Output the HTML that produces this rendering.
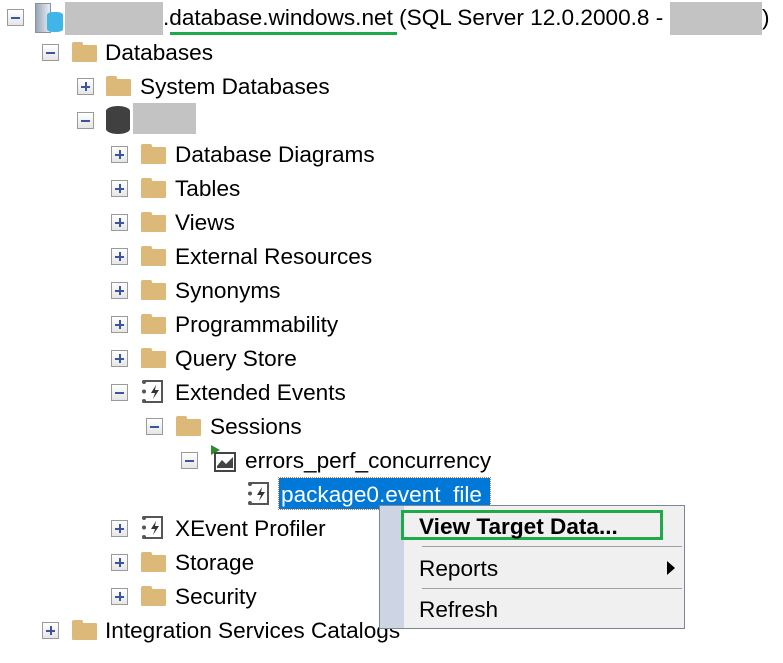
<!DOCTYPE html>
<html><head><style>
body{margin:0;width:783px;height:663px;background:#fff;position:relative;overflow:hidden;font-family:"Liberation Sans",sans-serif;font-size:22.6px;color:#000}
.r{position:absolute;height:34px;line-height:36px;white-space:nowrap}
.e{position:absolute;width:15px;height:15px;border:1px solid #9a9a9a;background:linear-gradient(#fff,#e6e6e6);top:9px}
.e::before{content:"";position:absolute;left:3px;top:7px;width:9px;height:2px;background:#3b55a0}
.p::after{content:"";position:absolute;left:7px;top:3px;width:2px;height:9px;background:#3b55a0}
.f{position:absolute;top:7px;width:25px;height:20px}
.f::before{content:"";position:absolute;left:0;top:0;width:11px;height:5px;background:#dcb879;border-radius:2px 2px 0 0}
.f::after{content:"";position:absolute;left:0;top:3px;width:25px;height:17px;background:#dcb879;border-radius:1px}
.x{position:absolute;top:5px;width:21px;height:23px;border:2px solid #555;border-left:4px dotted #555;background:#fff;box-sizing:border-box}
.x svg{position:absolute;left:3px;top:2px}
.t{position:absolute;top:0}
.g{position:absolute;background:#c3c3c3}
</style></head><body>
<div class="r" style="top:0;left:0;width:783px">
<div class="e" style="left:7px"></div>
<div style="position:absolute;left:35px;top:3px;width:14px;height:28px;background:linear-gradient(90deg,#9aa6b6,#e7edf4);border:1px solid #8891a0"></div>
<div style="position:absolute;left:47px;top:12px;width:16px;height:20px;background:#41b5e8;border-radius:6px/3px"></div>
<div class="g" style="left:65px;top:2px;width:98px;height:33px"></div>
<span class="t" style="left:163px">.database.windows.net (SQL Server 12.0.2000.8 - </span>
<div class="g" style="left:670px;top:2px;width:92px;height:33px"></div>
<span class="t" style="left:762px">)</span>
<div style="position:absolute;left:170px;top:32px;width:227px;height:3px;background:#1faa4a"></div>
</div>
<div class="r" style="top:35px;left:0"><div class="e" style="left:42px"></div><div class="f" style="left:72px"></div><span class="t" style="left:105px">Databases</span></div>
<div class="r" style="top:69px;left:0"><div class="e p" style="left:77px"></div><div class="f" style="left:106px"></div><span class="t" style="left:140px">System Databases</span></div>
<div class="r" style="top:103px;left:0"><div class="e" style="left:77px"></div><div style="position:absolute;left:106px;top:3px;width:24px;height:28px;background:#404040;border-radius:12px/5px"></div><div class="g" style="left:133px;top:0;width:63px;height:31px"></div></div>
<div class="r" style="top:137px;left:0"><div class="e p" style="left:111px"></div><div class="f" style="left:141px"></div><span class="t" style="left:175px">Database Diagrams</span></div>
<div class="r" style="top:171px;left:0"><div class="e p" style="left:111px"></div><div class="f" style="left:141px"></div><span class="t" style="left:175px">Tables</span></div>
<div class="r" style="top:205px;left:0"><div class="e p" style="left:111px"></div><div class="f" style="left:141px"></div><span class="t" style="left:175px">Views</span></div>
<div class="r" style="top:239px;left:0"><div class="e p" style="left:111px"></div><div class="f" style="left:141px"></div><span class="t" style="left:175px">External Resources</span></div>
<div class="r" style="top:273px;left:0"><div class="e p" style="left:111px"></div><div class="f" style="left:141px"></div><span class="t" style="left:175px">Synonyms</span></div>
<div class="r" style="top:307px;left:0"><div class="e p" style="left:111px"></div><div class="f" style="left:141px"></div><span class="t" style="left:175px">Programmability</span></div>
<div class="r" style="top:341px;left:0"><div class="e p" style="left:111px"></div><div class="f" style="left:141px"></div><span class="t" style="left:175px">Query Store</span></div>
<div class="r" style="top:375px;left:0"><div class="e" style="left:111px"></div><div class="x" style="left:142px"><svg width="12" height="16"><path d="M7 1 L2 9 L6 9 L4 15 L10 6 L6 6 Z" fill="#333"/></svg></div><span class="t" style="left:175px">Extended Events</span></div>
<div class="r" style="top:409px;left:0"><div class="e" style="left:146px"></div><div class="f" style="left:176px"></div><span class="t" style="left:210px">Sessions</span></div>
<div class="r" style="top:443px;left:0"><div class="e" style="left:181px"></div>
<div style="position:absolute;left:211px;top:2px;width:0;height:0;border-left:9px solid #2e8b2e;border-top:5px solid transparent;border-bottom:5px solid transparent"></div>
<div style="position:absolute;left:214px;top:9px;width:22px;height:20px;border:2px solid #444;box-sizing:border-box;background:#fff"><svg width="18" height="16" style="position:absolute;left:0;top:0"><path d="M1 12 L6 6 L10 10 L17 3 L17 14 L1 14Z" fill="#444"/></svg></div>
<span class="t" style="left:245px">errors_perf_concurrency</span></div>
<div class="r" style="top:477px;left:0"><div class="x" style="left:248px"><svg width="12" height="16"><path d="M7 1 L2 9 L6 9 L4 15 L10 6 L6 6 Z" fill="#333"/></svg></div>
<div style="position:absolute;left:279px;top:1px;width:211px;height:31px;background:#0078d7;outline:1px dotted #d08030"></div>
<span class="t" style="left:281px;color:#fff">package0.event_file</span></div>
<div class="r" style="top:511px;left:0"><div class="e p" style="left:111px"></div><div class="x" style="left:142px"><svg width="12" height="16"><path d="M7 1 L2 9 L6 9 L4 15 L10 6 L6 6 Z" fill="#333"/></svg></div><span class="t" style="left:175px">XEvent Profiler</span></div>
<div class="r" style="top:545px;left:0"><div class="e p" style="left:111px"></div><div class="f" style="left:141px"></div><span class="t" style="left:175px">Storage</span></div>
<div class="r" style="top:579px;left:0"><div class="e p" style="left:111px"></div><div class="f" style="left:141px"></div><span class="t" style="left:175px">Security</span></div>
<div class="r" style="top:613px;left:0"><div class="e p" style="left:42px"></div><div class="f" style="left:72px"></div><span class="t" style="left:105px">Integration Services Catalogs</span></div>
<div style="position:absolute;left:379px;top:505px;width:304px;height:122px;background:#f0f0f0;border:1px solid #7c8698">
<div style="position:absolute;left:0;top:0;width:24px;height:122px;background:#cdd4e4"></div>
<div style="position:absolute;left:21px;top:4px;width:262px;height:30px;border:3px solid #1faa4a;box-sizing:border-box"></div>
<div style="position:absolute;left:39px;top:5px;line-height:32px;font-weight:bold">View Target Data...</div>
<div style="position:absolute;left:42px;top:40px;width:260px;height:1px;background:#a0a0a0"></div>
<div style="position:absolute;left:39px;top:47px;line-height:32px">Reports</div>
<div style="position:absolute;left:287px;top:55px;border-left:8px solid #000;border-top:7px solid transparent;border-bottom:7px solid transparent"></div>
<div style="position:absolute;left:42px;top:82px;width:260px;height:1px;background:#a0a0a0"></div>
<div style="position:absolute;left:39px;top:88px;line-height:32px">Refresh</div>
</div>
</body></html>
